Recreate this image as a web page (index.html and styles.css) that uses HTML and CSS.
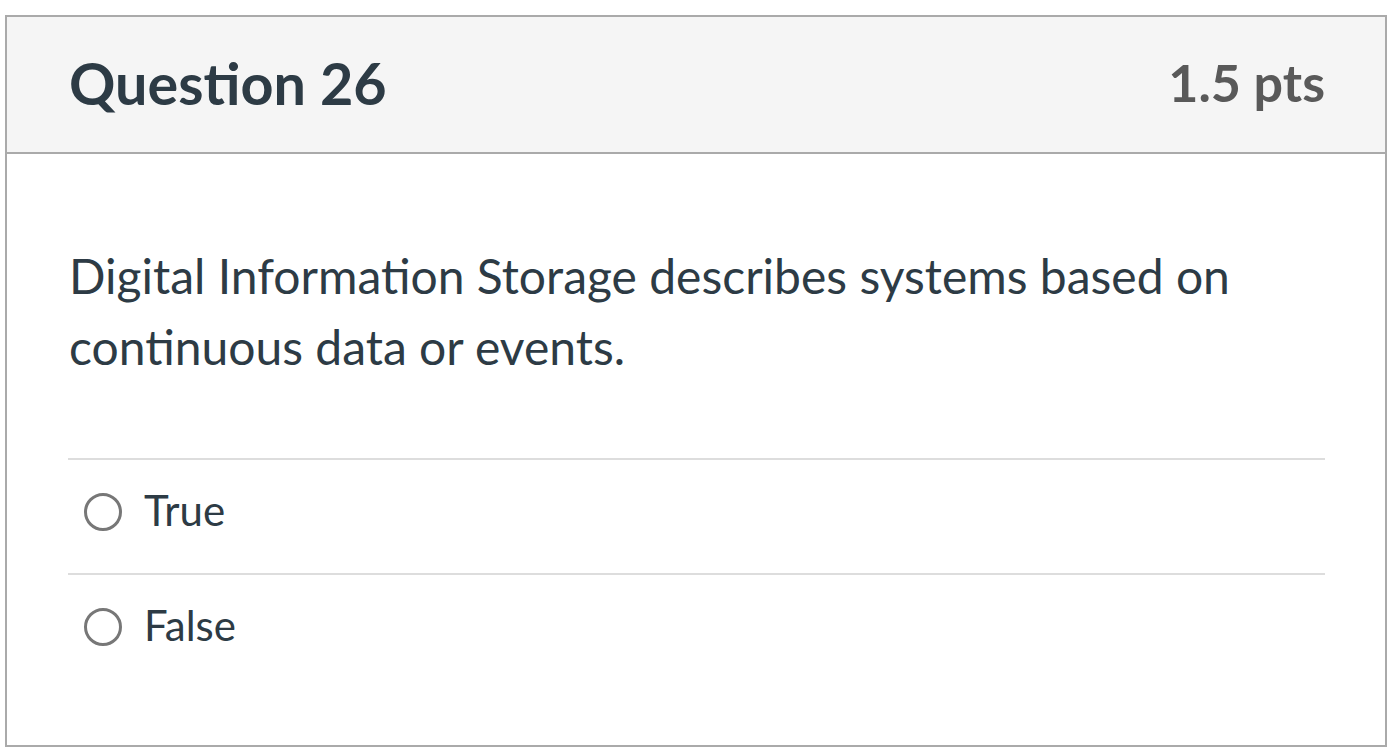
FILE: index.html
```html
<!DOCTYPE html>
<html lang="en">
<head>
<meta charset="utf-8">
<title>Question 26</title>
<link rel="stylesheet" href="styles.css">
</head>
<body>
<div class="question">
  <div class="question-header">
    <h2 class="question-title">Question 26</h2>
    <span class="question-points">1.5 pts</span>
  </div>
  <div class="question-body">
    <p class="question-text">Digital Information Storage describes systems based on continuous data or events.</p>
    <div class="answers">
      <label class="answer">
        <span class="radio"></span>
        <span class="answer-label">True</span>
      </label>
      <label class="answer">
        <span class="radio"></span>
        <span class="answer-label">False</span>
      </label>
    </div>
  </div>
</div>
</body>
</html>
```

FILE: styles.css
```css
html, body {
  margin: 0;
  padding: 0;
  background: #ffffff;
}

body {
  font-family: Lato, "Liberation Sans", sans-serif;
  color: #2d3b45;
  padding: 15px 5px 0 5px;
  height: 747px;
  box-sizing: border-box;
  overflow: hidden;
}

.question {
  width: 1382px;
  height: 732px;
  box-sizing: border-box;
  border: 2px solid #aaaaaa;
  display: flex;
  flex-direction: column;
}

.question-header {
  flex: none;
  background: #f5f5f5;
  border-bottom: 2px solid #aaaaaa;
  display: flex;
  align-items: center;
  justify-content: space-between;
  padding: 0 60px 5px 62px;
  box-sizing: border-box;
  height: 137px;
}

.question-title {
  margin: 0;
  font-size: 57.5px;
  font-weight: 700;
  color: #2d3b45;
}

.question-points {
  font-size: 52px;
  font-weight: 700;
  color: #595959;
}

.question-body {
  padding: 0 60px 0 61px;
}

.question-text {
  margin: 86px 0 0 1px;
  font-size: 48px;
  line-height: 71px;
}

.answers {
  margin-top: 76px;
}

.answer {
  display: flex;
  align-items: center;
  height: 115px;
  border-top: 2px solid #dddddd;
  box-sizing: border-box;
  padding: 0 0 14px 16px;
}

.radio {
  width: 38px;
  height: 38px;
  box-sizing: border-box;
  border: 3px solid #777777;
  border-radius: 50%;
  flex: none;
  margin-top: 4px;
}

.answer-label {
  margin-left: 22px;
  font-size: 42px;
}
```
